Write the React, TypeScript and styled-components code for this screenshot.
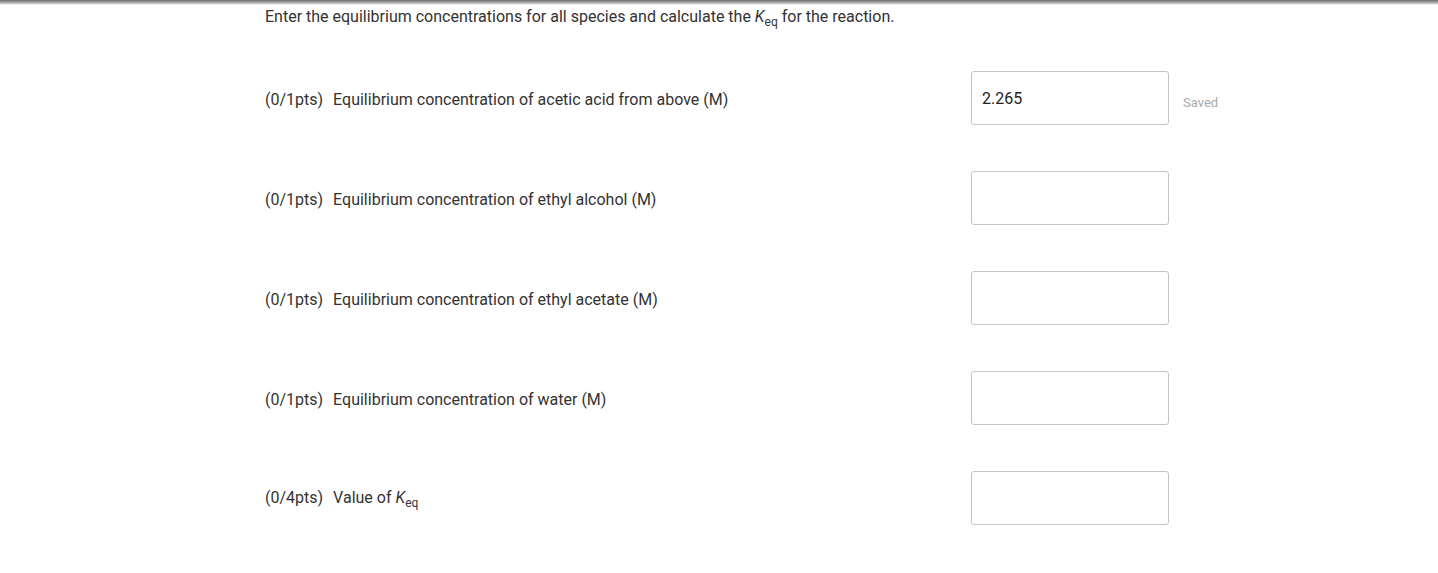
import { FC } from "react";
import styled, { createGlobalStyle } from "styled-components";

const GlobalStyle = createGlobalStyle`
	html, body {
		margin: 0;
		padding: 0;
		background: #fff;
	}
	body {
		font-family: Roboto, "Liberation Sans", sans-serif;
		color: #333;
	}
`;

interface Question {
	id: number;
	pts: string;
	label: React.ReactNode;
	value?: string;
	saved?: boolean;
	hasSub?: boolean;
}

const Keq: FC = () => (
	<>
		<i>K</i>
		<Sub>eq</Sub>
	</>
);

const questions: Question[] = [
	{ id: 1, pts: "(0/1pts)", label: "Equilibrium concentration of acetic acid from above (M)", value: "2.265", saved: true },
	{ id: 2, pts: "(0/1pts)", label: "Equilibrium concentration of ethyl alcohol (M)" },
	{ id: 3, pts: "(0/1pts)", label: "Equilibrium concentration of ethyl acetate (M)" },
	{ id: 4, pts: "(0/1pts)", label: "Equilibrium concentration of water (M)" },
	{
		id: 5,
		pts: "(0/4pts)",
		hasSub: true,
		label: (
			<>
				Value of <Keq />
			</>
		),
	},
];

export default function App() {
	return (
		<Page>
			<GlobalStyle />
			<Content>
				<Intro>
					Enter the equilibrium concentrations for all species and calculate the <Keq /> for the reaction.
				</Intro>
				<List>
					{questions.map((q) => (
						<Row key={q.id}>
							<Label $hasSub={q.hasSub}>
								<Points>{q.pts}</Points>
								{q.label}
							</Label>
							<Field type='text' defaultValue={q.value ?? ""} />
							<Status>{q.saved ? "Saved" : ""}</Status>
						</Row>
					))}
				</List>
			</Content>
		</Page>
	);
}

const Page = styled.div`
	min-height: 573px;
	background: linear-gradient(to bottom, #6e6e6e 0, #9a9a9a 2px, #d8d8d8 4px, #fff 5px) no-repeat;
	background-size: 100% 5px;
`;

const Content = styled.div`
	padding: 7px 0 0 265px;
`;

const Intro = styled.p`
	margin: 0;
	font-size: 16px;
	line-height: 20px;
	height: 20px;
`;

const Sub = styled.sub`
	font-size: 12px;
	vertical-align: -4px;
	line-height: 0;
`;

const List = styled.div`
	display: flex;
	flex-direction: column;
	gap: 46px;
	margin-top: 44px;
`;

const Row = styled.div`
	display: grid;
	grid-template-columns: 706px 198px auto;
	align-items: center;
	height: 54px;
`;

const Label = styled.div<{ $hasSub?: boolean }>`
	font-size: 16px;
	line-height: 20px;
	padding-top: ${(p) => (p.$hasSub ? "0" : "3px")};
	padding-bottom: ${(p) => (p.$hasSub ? "1px" : "0")};
`;

const Points = styled.span`
	margin-right: 10px;
`;

const Field = styled.input`
	box-sizing: border-box;
	width: 198px;
	height: 54px;
	padding: 0 10px;
	border: 1px solid #c4c4c4;
	border-radius: 3px;
	font-family: Roboto, "Liberation Sans", sans-serif;
	font-size: 16px;
	color: #222;
	background: #fff;
	outline: none;
`;

const Status = styled.span`
	margin-left: 14px;
	padding-top: 9px;
	font-size: 13px;
	color: #aaa;
`;
